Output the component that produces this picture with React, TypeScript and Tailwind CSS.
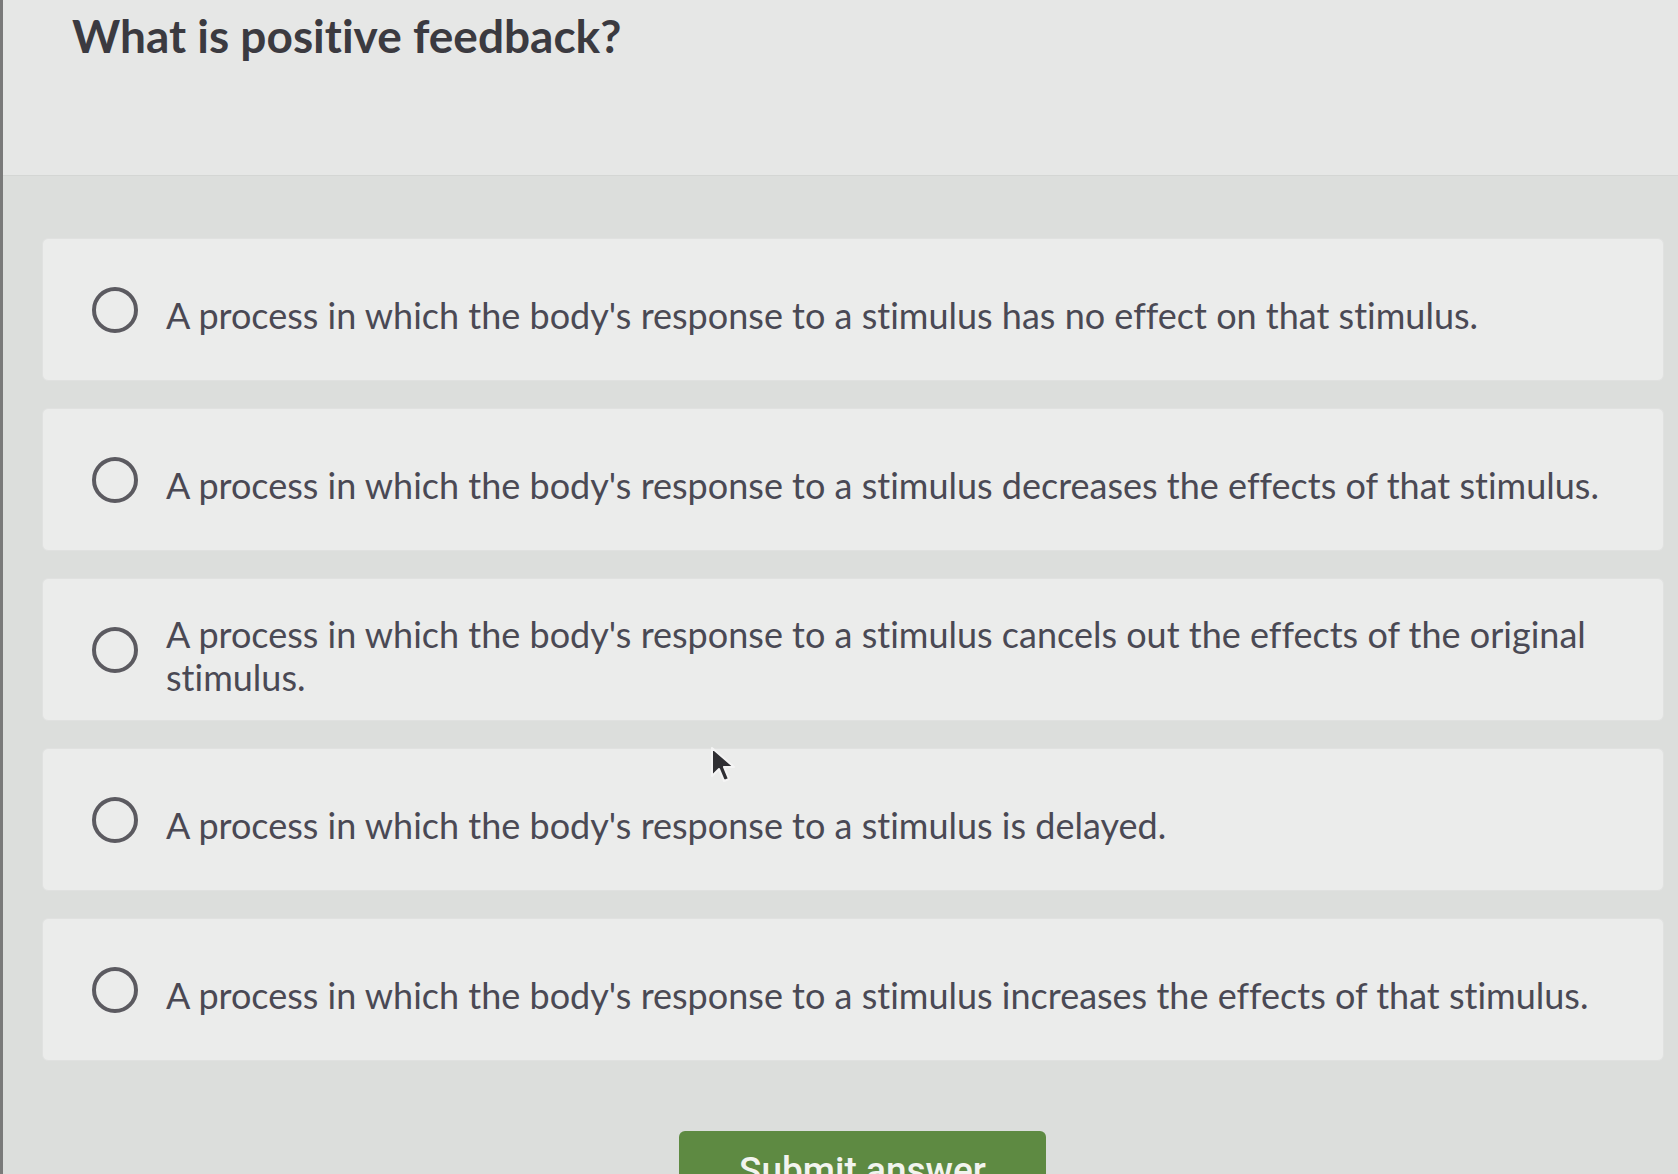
import { useState } from "react";

const options = [
  "A process in which the body's response to a stimulus has no effect on that stimulus.",
  "A process in which the body's response to a stimulus decreases the effects of that stimulus.",
  "A process in which the body's response to a stimulus cancels out the effects of the original stimulus.",
  "A process in which the body's response to a stimulus is delayed.",
  "A process in which the body's response to a stimulus increases the effects of that stimulus.",
];

function Option({ text, checked, onSelect }: { text: string; checked: boolean; onSelect: () => void }) {
  return (
    <label
      onClick={onSelect}
      className="flex h-[143px] cursor-pointer items-center rounded-md border border-[#e0e1e0] bg-[#ebeceb] pl-[49px] pr-[40px]"
    >
      <span className="mr-[28px] flex h-[46px] w-[46px] shrink-0 items-center justify-center rounded-full border-[4px] border-[#5b5a60]">
        {checked && <span className="h-[22px] w-[22px] rounded-full bg-[#5b5a60]" />}
      </span>
      <span className="pt-[12px] text-[36px] leading-[43px] text-[#4a4954]">{text}</span>
    </label>
  );
}

export default function App() {
  const [selected, setSelected] = useState<number | null>(null);

  return (
    <div
      className="relative h-[1174px] w-[1678px] overflow-hidden border-l-[3px] border-[#7a7a7a] bg-[#dcdedc] [font-variant-ligatures:none]"
      style={{ fontFamily: "Lato, 'Noto Sans', sans-serif" }}
    >
      <header className="h-[176px] border-b border-[#d4d6d4] bg-[#e6e7e6] pl-[69px] pt-[4px]">
        <h1 className="text-[46px] font-bold leading-[64px] text-[#3b3a40]">What is positive feedback?</h1>
      </header>

      <div className="flex flex-col gap-[27px] pl-[39px] pr-[14px] pt-[62px]">
        {options.map((o, i) => (
          <Option key={i} text={o} checked={selected === i} onSelect={() => setSelected(i)} />
        ))}
      </div>

      <div className="flex justify-center pl-[44px] pt-[70px]">
        <button
          className="h-[80px] w-[367px] rounded-t-[6px] bg-[#5e8a42] pb-[4px] text-[37px] font-medium leading-[80px] text-[#f2f4ef]"
          style={{ fontFamily: "Roboto, 'Liberation Sans', sans-serif" }}
        >
          Submit answer
        </button>
      </div>

      <svg className="absolute left-[707px] top-[746px]" width="26" height="38" viewBox="0 0 26 38">
        <path d="M2 2 L2 30 L9 23 L14 35 L19 33 L14 21 L24 21 Z" fill="#2f2f33" stroke="#f4f4f4" strokeWidth="2" strokeLinejoin="round" />
      </svg>
    </div>
  );
}
